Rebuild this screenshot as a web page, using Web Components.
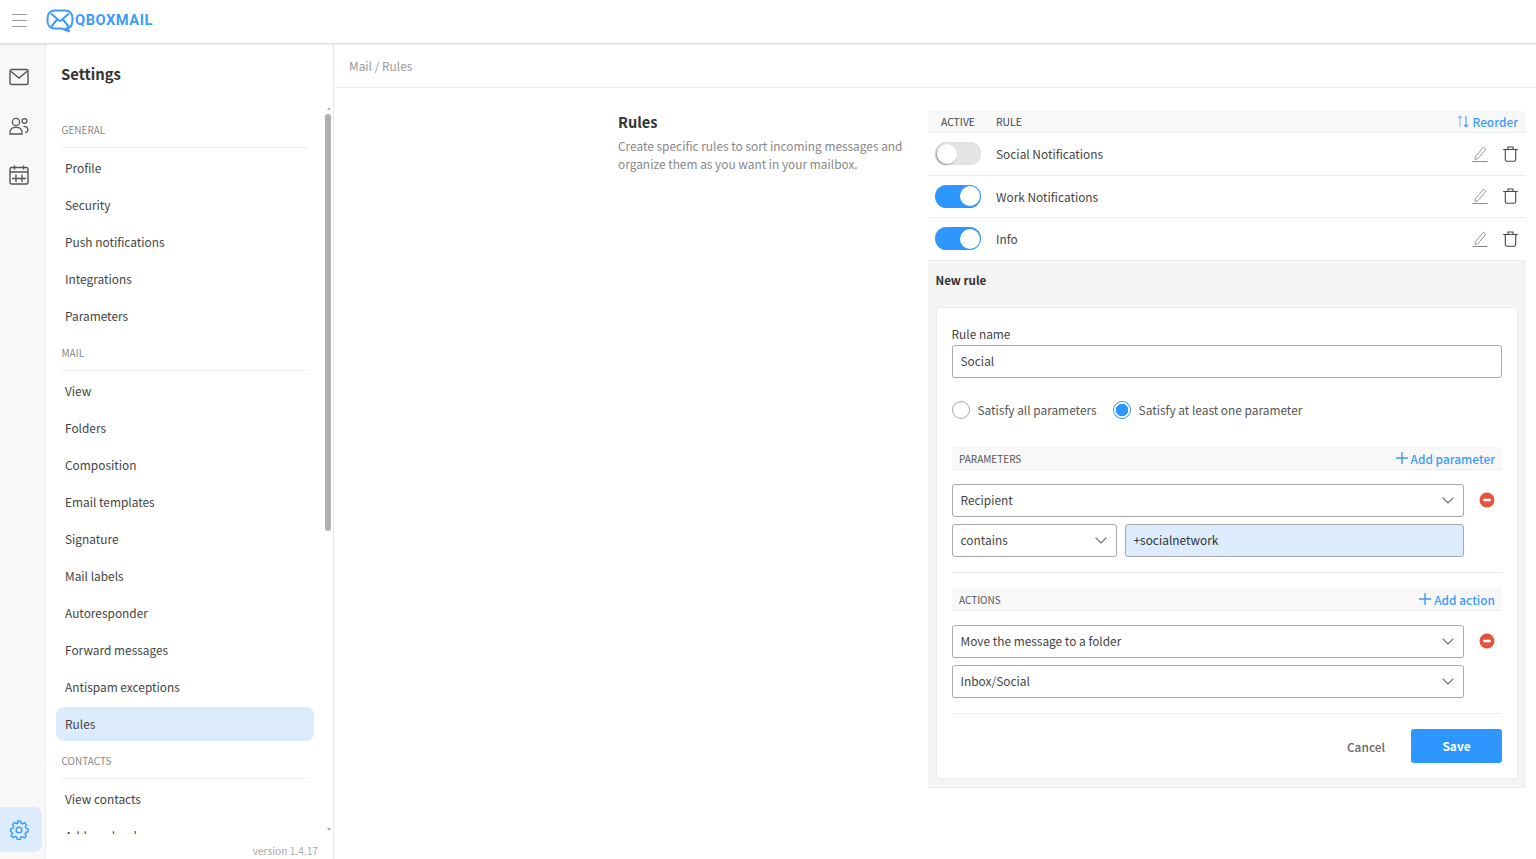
<!DOCTYPE html>
<html lang="en">
<head>
<meta charset="utf-8">
<title>QBoxMail - Rules</title>
<style>
    html, body{
        margin: 0;
        height: 100%;
        overflow: hidden;
        background: #fff;
        font-family: "Noto Sans CJK SC", "Noto Sans", sans-serif;
        font-size: 11.9px;
        color: #444;
    }
    .app{
        display: flex;
        flex-direction: column;
        height: 100vh;
    }
    .body{
        display: flex;
        flex: 1;
        min-height: 0;
    }
</style>
</head>
<body>
<div class="app">
    <qb-topbar></qb-topbar>
    <div class="body">
        <qb-rail></qb-rail>
        <qb-sidebar></qb-sidebar>
        <qb-rules-page></qb-rules-page>
    </div>
</div>

<script>
const ICONS = {
    mail: `<svg width="20" height="18" viewBox="0 0 20 18" fill="none" stroke="#555" stroke-width="1.4"><rect x="1" y="1.5" width="18" height="15" rx="1.5"/><path d="M1.5 3l8.5 7 8.5-7"/></svg>`,
    users: `<svg width="20" height="18" viewBox="0 0 20 18" fill="none" stroke="#555" stroke-width="1.3"><circle cx="7" cy="5" r="3.6"/><path d="M1 17v-1.6c0-3 2.4-5 6-5s6 2 6 5V17H1z"/><circle cx="15.500" cy="4" r="2.400"/><path d="M14.500 9.400c2.600 0 4.400 1.200 4.400 3.600 0 1.600-1.200 2.400-2.900 2.400"/></svg>`,
    calendar: `<svg width="20" height="20" viewBox="0 0 20 20" fill="none" stroke="#555" stroke-width="1.4"><rect x="1" y="2.500" width="18" height="16.500" rx="1.500"/><path d="M1 7h18M5.500 .5v4M14.500 .5v4M7 9.500v7.500M13 9.500v7.500M3 13.500h14"/></svg>`,
    gear: `<svg width="20" height="20" viewBox="0 0 24 24" fill="none" stroke="#3d9bfb" stroke-width="1.7" stroke-linejoin="round"><path d="M10.300 2h3.400l.6 2.800c.7.2 1.300.5 1.900.9l2.500-1.500 2.400 2.400-1.500 2.500c.4.600.7 1.200.9 1.900l2.500.7v3.400l-2.800.6c-.2.700-.5 1.300-.9 1.900l1.500 2.500-2.400 2.400-2.500-1.500c-.6.400-1.200.7-1.900.9l-.6 2.500h-3.400l-.6-2.800c-.7-.2-1.300-.5-1.900-.9l-2.500 1.500-2.400-2.400 1.500-2.500c-.4-.6-.7-1.200-.9-1.900L2 14.700v-3.400l2.800-.6c.2-.7.5-1.300.9-1.900L4.200 6.300l2.400-2.400 2.500 1.500c.6-.4 1.200-.7 1.900-.9z" transform="translate(0 -1)"/><circle cx="12" cy="12" r="3.400"/></svg>`,
    pencil: `<svg width="16" height="16" viewBox="0 0 16 16" fill="none" stroke="#999" stroke-width="1"><path d="M3.500 10.500L11.500 1.200l2.400 2.100-8 9.200-2.900 1z"/><path d="M.5 15.500h15" stroke="#888"/></svg>`,
    trash: `<svg width="15" height="16" viewBox="0 0 15 16" fill="none" stroke="#444" stroke-width="1.1"><path d="M.2 3.500h14.600M5 3.500V1h5v2.500M2.300 3.500v10c0 1 .6 1.800 1.600 1.800h7.200c1 0 1.600-.8 1.600-1.800v-10"/></svg>`,
    chevron: `<svg width="12" height="7" viewBox="0 0 12 7" fill="none" stroke="#666" stroke-width="1.1"><path d="M.6.6L6 6l5.400-5.400"/></svg>`,
    plus: `<svg width="12" height="12" viewBox="0 0 12 12" fill="none" stroke="#3d9bfb" stroke-width="1.4"><path d="M6 0v12M0 6h12"/></svg>`,
    reorder: `<svg width="12" height="13" viewBox="0 0 12 13" fill="none" stroke-width="1.1"><path d="M3 12V1M1 3.200L3 1l2 2.200" stroke="#7dbcfb"/><path d="M9 1v11M7 9.800L9 12l2-2.200" stroke="#3d9bfb"/></svg>`,
    minus: `<svg width="16" height="16" viewBox="0 0 16 16"><circle cx="8" cy="8" r="7.500" fill="#e5533d"/><rect x="4" y="6.700" width="8" height="2.600" rx="1" fill="#fff"/></svg>`
};

class QbTopbar extends HTMLElement {
    constructor(){
        super();
        this.attachShadow({mode: "open"}).innerHTML = `
        <style>
            :host{
                display: flex;
                align-items: center;
                flex: none;
                height: 41px;
                padding-bottom: 2px;
                background: #fff;
                border-bottom: 1px solid #e0e0e0;
                box-shadow: 0 1px 2px rgba(0,0,0,.08);
                position: relative;
                z-index: 2;
            }
            .burger{
                width: 15px;
                height: 11px;
                margin-left: 12px;
                margin-right: 19px;
                border-top: 1px solid #999;
                border-bottom: 1px solid #999;
                position: relative;
            }
            .burger::after{
                content: "";
                position: absolute;
                left: 0;
                right: 0;
                top: 5px;
                height: 1px;
                background: #999;
            }
            .logo{
                display: flex;
                align-items: center;
            }
            .name{
                font-family: "Roboto", sans-serif;
                font-weight: 700;
                font-size: 14.700px;
                letter-spacing: .5px;
                color: #3d9bfb;
                margin-left: 1px;
                margin-top: -1px;
            }
        </style>
        <div class="burger"></div>
        <div class="logo">
            <svg width="28" height="24" viewBox="0 0 28 24" fill="none" stroke="#3d9bfb" stroke-width="2">
                <path d="M9 1.500h10c4.500 0 7.500 3 7.500 7.500v2.500c0 4.500-2.500 7.500-6 8l3 3-7.500-3H9c-4.500 0-7.500-3-7.500-7.500V9c0-4.500 3-7.500 7.500-7.500z"/>
                <path d="M5 4.500l8 7c.6.500 1.400.500 2 0l8-7M5 18l6.500-8M23 18l-6.500-8"/>
            </svg>
            <span class="name">QBOXMAIL</span>
        </div>
        `;
    }
}
customElements.define("qb-topbar", QbTopbar);

class QbRail extends HTMLElement {
    constructor(){
        super();
        this.attachShadow({mode: "open"}).innerHTML = `
        <style>
            :host{
                display: flex;
                flex-direction: column;
                flex: none;
                width: 45px;
                background: #f8f8f8;
                border-right: 1px solid #ececec;
            }
            .btn{
                display: flex;
                align-items: center;
                justify-content: center;
                width: 38px;
                height: 49px;
            }
            .top{
                padding-top: 8px;
                flex: 1;
            }
            .settings{
                display: flex;
                align-items: center;
                justify-content: center;
                box-sizing: border-box;
                width: 42px;
                height: 45px;
                margin-bottom: 7px;
                padding-right: 4px;
                background: #dcecfd;
                border-radius: 0 8px 8px 0;
            }
        </style>
        <div class="top">
            <div class="btn">${ICONS.mail}</div>
            <div class="btn">${ICONS.users}</div>
            <div class="btn">${ICONS.calendar}</div>
        </div>
        <div class="settings">${ICONS.gear}</div>
        `;
    }
}
customElements.define("qb-rail", QbRail);

class QbNavItem extends HTMLElement {
    constructor(){
        super();
        this.attachShadow({mode: "open"}).innerHTML = `
        <style>
            :host{
                display: block;
                height: 34px;
                line-height: 33px;
                margin-bottom: 3px;
                padding-left: 9px;
                border-radius: 8px;
                color: #444;
            }
            :host([active]){
                background: #dcecfd;
            }
        </style>
        <slot></slot>
        `;
    }
}
customElements.define("qb-nav-item", QbNavItem);

class QbNavLabel extends HTMLElement {
    constructor(){
        super();
        this.attachShadow({mode: "open"}).innerHTML = `
        <style>
            :host{
                display: block;
                margin: 0 5px 3px 5.500px;
                padding: 8px 0;
                line-height: 18px;
                font-size: 10px;
                color: #888;
                text-transform: uppercase;
                border-bottom: 1px solid #eee;
            }
        </style>
        <slot></slot>
        `;
    }
}
customElements.define("qb-nav-label", QbNavLabel);

class QbSidebar extends HTMLElement {
    constructor(){
        super();
        const groups = [
            ["General", ["Profile", "Security", "Push notifications", "Integrations", "Parameters"]],
            ["Mail", ["View", "Folders", "Composition", "Email templates", "Signature", "Mail labels", "Autoresponder", "Forward messages", "Antispam exceptions", "Rules"]],
            ["Contacts", ["View contacts", "Address book"]]
        ];
        const list = groups.map(([label, items]) => `
            <qb-nav-label>${label}</qb-nav-label>
            ${items.map(i => `<qb-nav-item ${i === "Rules" ? "active" : ""}>${i}</qb-nav-item>`).join("")}
        `).join("");
        this.attachShadow({mode: "open"}).innerHTML = `
        <style>
            :host{
                display: flex;
                flex-direction: column;
                flex: none;
                width: 287px;
                border-right: 1px solid #e8e8e8;
                position: relative;
            }
            h2{
                flex: none;
                height: 61px;
                margin: 0;
                padding-left: 15px;
                box-sizing: border-box;
                line-height: 59px;
                font-size: 14.800px;
                font-weight: 600;
                color: #333;
            }
            .list{
                flex: 1;
                min-height: 0;
                overflow: hidden;
                padding: 8px 19px 0 10px;
            }
            .version{
                flex: none;
                height: 25px;
                line-height: 33px;
                padding-right: 15px;
                text-align: right;
                font-size: 10.200px;
                color: #aaa;
            }
            /* scrollbar painted over the list */
            .thumb{
                position: absolute;
                right: 2px;
                top: 70px;
                width: 6px;
                height: 417px;
                background: #b0b0b0;
                border-radius: 3px;
            }
            .arrow{
                position: absolute;
                right: 2.500px;
                width: 0;
                height: 0;
                border-left: 2.500px solid transparent;
                border-right: 2.500px solid transparent;
            }
            .up{
                top: 63px;
                border-bottom: 3px solid #bbb;
            }
            .down{
                top: 784px;
                border-top: 3px solid #aaa;
            }
        </style>
        <h2>Settings</h2>
        <div class="list">${list}</div>
        <div class="version">version 1.4.17</div>
        <div class="arrow up"></div>
        <div class="thumb"></div>
        <div class="arrow down"></div>
        `;
    }
}
customElements.define("qb-sidebar", QbSidebar);

class QbToggle extends HTMLElement {
    constructor(){
        super();
        this.attachShadow({mode: "open"}).innerHTML = `
        <style>
            :host{
                display: block;
                flex: none;
                width: 46px;
                height: 23px;
                border-radius: 12px;
                background: #e4e4e4;
                position: relative;
                box-shadow: inset 0 0 1px rgba(0,0,0,.15);
            }
            :host([on]){
                background: #2e96ff;
            }
            .knob{
                position: absolute;
                top: 1.500px;
                left: 1.500px;
                width: 20px;
                height: 20px;
                border-radius: 50%;
                background: #fff;
                box-shadow: -1px 1px 2px rgba(0,0,0,.35);
            }
            :host([on]) .knob{
                left: auto;
                right: 1.500px;
                box-shadow: none;
            }
        </style>
        <div class="knob"></div>
        `;
    }
}
customElements.define("qb-toggle", QbToggle);

class QbRuleRow extends HTMLElement {
    constructor(){
        super();
        this.attachShadow({mode: "open"}).innerHTML = `
        <style>
            :host{
                display: flex;
                align-items: center;
                height: 42.500px;
                box-sizing: border-box;
                padding: 0 8px 0 7px;
                border-bottom: 1px solid #ececec;
                color: #444;
            }
            .name{
                flex: 1;
                margin-left: 15px;
            }
            .actions{
                display: flex;
                align-items: center;
                gap: 15px;
            }
            svg{
                display: block;
            }
        </style>
        <slot name="toggle"></slot>
        <div class="name"><slot></slot></div>
        <div class="actions">${ICONS.pencil}${ICONS.trash}</div>
        `;
    }
}
customElements.define("qb-rule-row", QbRuleRow);

class QbSectionHead extends HTMLElement {
    constructor(){
        super();
        this.attachShadow({mode: "open"}).innerHTML = `
        <style>
            :host{
                display: flex;
                align-items: center;
                justify-content: space-between;
                box-sizing: border-box;
                height: 22.500px;
                padding: 1px 7px 0 7.500px;
                background: #f8f8f8;
                border-bottom: 1px solid #ececec;
                font-size: 10px;
                color: #555;
            }
            .add{
                display: flex;
                align-items: center;
                gap: 3px;
                font-size: 11.900px;
                font-weight: 500;
                color: #3d9bfb;
            }
        </style>
        <span><slot></slot></span>
        <span class="add">${ICONS.plus}<slot name="add"></slot></span>
        `;
    }
}
customElements.define("qb-section-head", QbSectionHead);

class QbField extends HTMLElement {
    constructor(){
        super();
        const arrow = this.hasAttribute("select") ? ICONS.chevron : "";
        this.attachShadow({mode: "open"}).innerHTML = `
        <style>
            :host{
                display: flex;
                align-items: center;
                justify-content: space-between;
                box-sizing: border-box;
                height: 33.500px;
                padding: 0 9px 1px 8px;
                background: #fff;
                border: 1px solid #a8a8a8;
                border-radius: 3px;
                color: #444;
            }
            :host([filled]){
                background: #dcecfd;
                color: #333;
            }
            svg{
                display: block;
                margin-top: 1px;
            }
        </style>
        <span><slot></slot></span>
        ${arrow}
        `;
    }
}
customElements.define("qb-field", QbField);

class QbRadio extends HTMLElement {
    constructor(){
        super();
        this.attachShadow({mode: "open"}).innerHTML = `
        <style>
            :host{
                display: inline-flex;
                align-items: center;
                gap: 8px;
                color: #555;
            }
            .dot{
                box-sizing: border-box;
                width: 18px;
                height: 18px;
                border: 1px solid #aaa;
                border-radius: 50%;
            }
            :host([checked]) .dot{
                border-color: #2e96ff;
                background: radial-gradient(circle, #2e96ff 0 6px, #fff 6.500px);
            }
        </style>
        <span class="dot"></span>
        <span><slot></slot></span>
        `;
    }
}
customElements.define("qb-radio", QbRadio);

class QbCondition extends HTMLElement {
    constructor(){
        super();
        this.attachShadow({mode: "open"}).innerHTML = `
        <style>
            :host{
                display: flex;
                gap: 15px;
            }
            .fields{
                flex: none;
                width: 512px;
                display: flex;
                flex-direction: column;
                gap: 6.500px;
            }
            .remove{
                height: 33.500px;
                display: flex;
                align-items: center;
            }
            svg{
                display: block;
            }
        </style>
        <div class="fields"><slot></slot></div>
        <div class="remove">${ICONS.minus}</div>
        `;
    }
}
customElements.define("qb-condition", QbCondition);

class QbRulesPage extends HTMLElement {
    constructor(){
        super();
        this.attachShadow({mode: "open"}).innerHTML = `
        <style>
            :host{
                display: block;
                flex: 1;
                min-width: 0;
            }
            .crumb{
                height: 43px;
                line-height: 43px;
                padding-left: 15px;
                border-bottom: 1px solid #eee;
                color: #999;
            }
            .content{
                display: flex;
                padding: 23px 10px 0 284px;
            }
            .intro{
                flex: none;
                width: 310px;
            }
            .intro h1{
                margin: 0 0 5px;
                font-size: 14.600px;
                line-height: 21px;
                font-weight: 600;
                color: #333;
            }
            .intro p{
                margin: 0;
                width: 295px;
                font-size: 11.900px;
                line-height: 18px;
                color: #888;
            }
            .panel{
                flex: none;
                width: 598px;
            }
            .head{
                display: flex;
                align-items: center;
                height: 22px;
                padding: 0 8px 1px 13px;
                background: #f8f8f8;
                border-bottom: 1px solid #ececec;
                box-sizing: border-box;
                font-size: 10.400px;
                color: #444;
            }
            .head .rule{
                flex: 1;
                margin-left: 21px;
            }
            .reorder{
                display: flex;
                align-items: center;
                gap: 3px;
                font-size: 11.900px;
                font-weight: 500;
                color: #3d9bfb;
            }
            .new{
                background: #f4f4f4;
                border-bottom: 1px solid #ececec;
                padding: 0 8px 8px 7.500px;
            }
            .new h3{
                margin: 0;
                height: 46px;
                line-height: 39px;
                font-size: 11.600px;
                font-weight: 600;
                color: #333;
            }
            .card{
                background: #fff;
                border: 1px solid #ececec;
                border-radius: 4px;
                padding: 17px 15px 15px;
            }
            .label{
                line-height: 18px;
                margin-bottom: 2px;
                color: #444;
            }
            .radios{
                display: flex;
                gap: 16px;
                height: 18px;
                line-height: 18px;
                margin: 22.500px 0 28.500px;
            }
            .row{
                display: flex;
                gap: 8px;
            }
            .rows{
                margin-top: 14px;
            }
            hr{
                margin: 15px 0;
                border: none;
                border-top: 1px solid #ececec;
            }
            .buttons{
                display: flex;
                justify-content: flex-end;
                align-items: center;
                gap: 26px;
            }
            .cancel{
                color: #666;
                font-weight: 500;
            }
            .save{
                width: 91px;
                height: 34px;
                line-height: 34px;
                text-align: center;
                background: #2e96ff;
                border-radius: 3px;
                color: #fff;
                font-weight: 600;
            }
        </style>
        <div class="crumb">Mail / Rules</div>
        <div class="content">
            <div class="intro">
                <h1>Rules</h1>
                <p>Create specific rules to sort incoming messages and organize them as you want in your mailbox.</p>
            </div>
            <div class="panel">
                <div class="head">
                    <span>ACTIVE</span>
                    <span class="rule">RULE</span>
                    <span class="reorder">${ICONS.reorder}Reorder</span>
                </div>
                <qb-rule-row><qb-toggle slot="toggle"></qb-toggle>Social Notifications</qb-rule-row>
                <qb-rule-row><qb-toggle slot="toggle" on></qb-toggle>Work Notifications</qb-rule-row>
                <qb-rule-row><qb-toggle slot="toggle" on></qb-toggle>Info</qb-rule-row>
                <div class="new">
                    <h3>New rule</h3>
                    <div class="card">
                        <div class="label">Rule name</div>
                        <qb-field>Social</qb-field>
                        <div class="radios">
                            <qb-radio>Satisfy all parameters</qb-radio>
                            <qb-radio checked>Satisfy at least one parameter</qb-radio>
                        </div>
                        <qb-section-head>PARAMETERS<span slot="add">Add parameter</span></qb-section-head>
                        <div class="rows">
                            <qb-condition>
                                <qb-field select>Recipient</qb-field>
                                <div class="row">
                                    <qb-field select style="flex:none;width:165px">contains</qb-field>
                                    <qb-field filled style="flex:1">+socialnetwork</qb-field>
                                </div>
                            </qb-condition>
                        </div>
                        <hr>
                        <qb-section-head>ACTIONS<span slot="add">Add action</span></qb-section-head>
                        <div class="rows">
                            <qb-condition>
                                <qb-field select>Move the message to a folder</qb-field>
                                <qb-field select>Inbox/Social</qb-field>
                            </qb-condition>
                        </div>
                        <hr>
                        <div class="buttons">
                            <span class="cancel">Cancel</span>
                            <span class="save">Save</span>
                        </div>
                    </div>
                </div>
            </div>
        </div>
        `;
    }
}
customElements.define("qb-rules-page", QbRulesPage);
</script>
</body>
</html>
